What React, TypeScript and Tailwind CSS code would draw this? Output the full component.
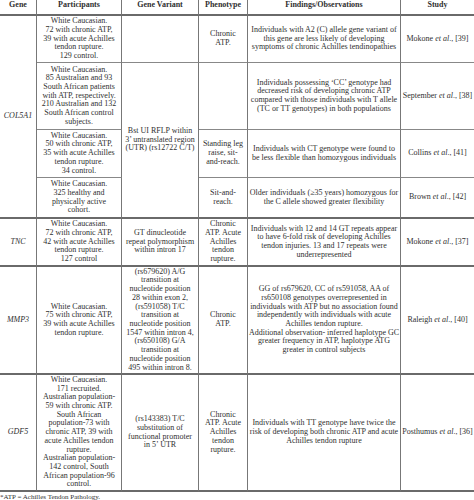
import * as React from 'react';

type Cell = {
  lines?: React.ReactNode[];
  col: string;
  row: string;
  thick?: boolean;
  last?: boolean;
  italic?: boolean;
};

const study = (name: string, ref: string) => (
  <>
    {name} <i>et al</i>., [{ref}]
  </>
);

const cells: Cell[] = [
  // COL5A1 block
  { col: 'col-start-1', row: 'row-start-2 row-span-4', thick: true, italic: true, lines: ['COL5A1'] },
  {
    col: 'col-start-2',
    row: 'row-start-2',
    lines: ['White Caucasian.', '72 with chronic ATP,', '39 with acute Achilles', 'tendon rupture.', '129 control.'],
  },
  { col: 'col-start-3', row: 'row-start-2' },
  { col: 'col-start-4', row: 'row-start-2', lines: ['Chronic', 'ATP.'] },
  {
    col: 'col-start-5',
    row: 'row-start-2',
    lines: [
      'Individuals with A2 (C) allele gene variant of',
      'this gene are less likely of developing',
      'symptoms of chronic Achilles tendinopathies',
    ],
  },
  { col: 'col-start-6', row: 'row-start-2', last: true, lines: [study('Mokone', '39')] },

  {
    col: 'col-start-2',
    row: 'row-start-3',
    lines: [
      'White Caucasian.',
      '85 Australian and 93',
      'South African patients',
      'with ATP, respectively.',
      '210 Australian and 132',
      'South African control',
      'subjects.',
    ],
  },
  {
    col: 'col-start-3',
    row: 'row-start-3 row-span-3',
    thick: true,
    lines: ['Bst UI RFLP within', '3’ untranslated region', '(UTR) (rs12722 C/T)'],
  },
  { col: 'col-start-4', row: 'row-start-3' },
  {
    col: 'col-start-5',
    row: 'row-start-3',
    lines: [
      'Individuals possessing ‘CC’ genotype had',
      'decreased risk of developing chronic ATP',
      'compared with those individuals with T allele',
      '(TC or TT genotypes) in both populations',
    ],
  },
  { col: 'col-start-6', row: 'row-start-3', last: true, lines: [study('September', '38')] },

  {
    col: 'col-start-2',
    row: 'row-start-4',
    lines: ['White Caucasian.', '50 with chronic ATP,', '35 with acute Achilles', 'tendon rupture.', '34 control.'],
  },
  { col: 'col-start-4', row: 'row-start-4', lines: ['Standing leg', 'raise, sit-', 'and-reach.'] },
  {
    col: 'col-start-5',
    row: 'row-start-4',
    lines: ['Individuals with CT genotype were found to', 'be less flexible than homozygous individuals'],
  },
  { col: 'col-start-6', row: 'row-start-4', last: true, lines: [study('Collins', '41')] },

  {
    col: 'col-start-2',
    row: 'row-start-5',
    thick: true,
    lines: ['White Caucasian.', '325 healthy and', 'physically active', 'cohort.'],
  },
  { col: 'col-start-4', row: 'row-start-5', thick: true, lines: ['Sit-and-', 'reach.'] },
  {
    col: 'col-start-5',
    row: 'row-start-5',
    thick: true,
    lines: ['Older individuals (≥35 years) homozygous for', 'the C allele showed greater flexibility'],
  },
  { col: 'col-start-6', row: 'row-start-5', thick: true, last: true, lines: [study('Brown', '42')] },

  // TNC
  { col: 'col-start-1', row: 'row-start-6', thick: true, italic: true, lines: ['TNC'] },
  {
    col: 'col-start-2',
    row: 'row-start-6',
    thick: true,
    lines: ['White Caucasian.', '72 with chronic ATP,', '42 with acute Achilles', 'tendon rupture.', '127 control'],
  },
  {
    col: 'col-start-3',
    row: 'row-start-6',
    thick: true,
    lines: ['GT dinucleotide', 'repeat polymorphism', 'within intron 17'],
  },
  {
    col: 'col-start-4',
    row: 'row-start-6',
    thick: true,
    lines: ['Chronic', 'ATP. Acute', 'Achilles', 'tendon', 'rupture.'],
  },
  {
    col: 'col-start-5',
    row: 'row-start-6',
    thick: true,
    lines: [
      'Individuals with 12 and 14 GT repeats appear',
      'to have 6-fold risk of developing Achilles',
      'tendon injuries. 13 and 17 repeats were',
      'underrepresented',
    ],
  },
  { col: 'col-start-6', row: 'row-start-6', thick: true, last: true, lines: [study('Mokone', '37')] },

  // MMP3
  { col: 'col-start-1', row: 'row-start-7', thick: true, italic: true, lines: ['MMP3'] },
  {
    col: 'col-start-2',
    row: 'row-start-7',
    thick: true,
    lines: ['White Caucasian.', '75 with chronic ATP,', '39 with acute Achilles', 'tendon rupture.'],
  },
  {
    col: 'col-start-3',
    row: 'row-start-7',
    thick: true,
    lines: [
      '(rs679620) A/G',
      'transition at',
      'nucleotide position',
      '28 within exon 2,',
      '(rs591058) T/C',
      'transition at',
      'nucleotide position',
      '1547 within intron 4,',
      '(rs650108) G/A',
      'transition at',
      'nucleotide position',
      '495 within intron 8.',
    ],
  },
  { col: 'col-start-4', row: 'row-start-7', thick: true, lines: ['Chronic', 'ATP.'] },
  {
    col: 'col-start-5',
    row: 'row-start-7',
    thick: true,
    lines: [
      'GG of rs679620, CC of rs591058, AA of',
      'rs650108 genotypes overrepresented in',
      'individuals with ATP but no association found',
      'independently with individuals with acute',
      'Achilles tendon rupture.',
      'Additional observation- inferred haplotype GC',
      'greater frequency in ATP, haplotype ATG',
      'greater in control subjects',
    ],
  },
  { col: 'col-start-6', row: 'row-start-7', thick: true, last: true, lines: [study('Raleigh', '40')] },

  // GDF5
  { col: 'col-start-1', row: 'row-start-8', thick: true, italic: true, lines: ['GDF5'] },
  {
    col: 'col-start-2',
    row: 'row-start-8',
    thick: true,
    lines: [
      'White Caucasian.',
      '171 recruited.',
      'Australian population-',
      '59 with chronic ATP.',
      'South African',
      'population-73 with',
      'chronic ATP, 39 with',
      'acute Achilles tendon',
      'rupture.',
      'Australian population-',
      '142 control, South',
      'African population-96',
      'control.',
    ],
  },
  {
    col: 'col-start-3',
    row: 'row-start-8',
    thick: true,
    lines: ['(rs143383) T/C', 'substitution of', 'functional promoter', 'in 5’ UTR'],
  },
  {
    col: 'col-start-4',
    row: 'row-start-8',
    thick: true,
    lines: ['Chronic', 'ATP. Acute', 'Achilles', 'tendon', 'rupture.'],
  },
  {
    col: 'col-start-5',
    row: 'row-start-8',
    thick: true,
    lines: [
      'Individuals with TT genotype have twice the',
      'risk of developing both chronic ATP and acute',
      'Achilles tendon rupture',
    ],
  },
  { col: 'col-start-6', row: 'row-start-8', thick: true, last: true, lines: [study('Posthumus', '36')] },
];

const headers = ['Gene', 'Participants', 'Gene Variant', 'Phenotype', 'Findings/Observations', 'Study'];

export default function App() {
  return (
    <div
      className="w-[474px] h-[500px] overflow-hidden bg-white text-[#303030]"
      style={{ fontFamily: '"Liberation Serif", "Times New Roman", serif' }}
    >
      <div className="grid grid-cols-[37px_85px_77px_49px_153px_73px] grid-rows-[16px_47px_67px_48px_41px_48px_108px_117px] text-[8px] leading-[8.7px]">
        {headers.map((h, i) => (
          <div
            key={h}
            className={`row-start-1 flex justify-center pt-[0.5px] font-bold border-b-2 border-[#6a6a6a] ${
              i < 5 ? 'border-r border-r-[#777]' : ''
            }`}
          >
            {h}
          </div>
        ))}
        {cells.map((c, i) => (
          <div
            key={i}
            className={`${c.col} ${c.row} flex flex-col items-center justify-center text-center whitespace-nowrap ${
              c.thick ? 'border-b-2 border-b-[#6a6a6a]' : 'border-b border-b-[#888]'
            } ${c.last ? '' : 'border-r border-r-[#777]'} ${c.italic ? 'italic' : ''}`}
          >
            {c.lines?.map((l, j) => (
              <div key={j}>{l}</div>
            ))}
          </div>
        ))}
      </div>
      <div className="text-[7px] leading-[8px] mt-[1px]">*ATP = Achilles Tendon Pathology.</div>
    </div>
  );
}
